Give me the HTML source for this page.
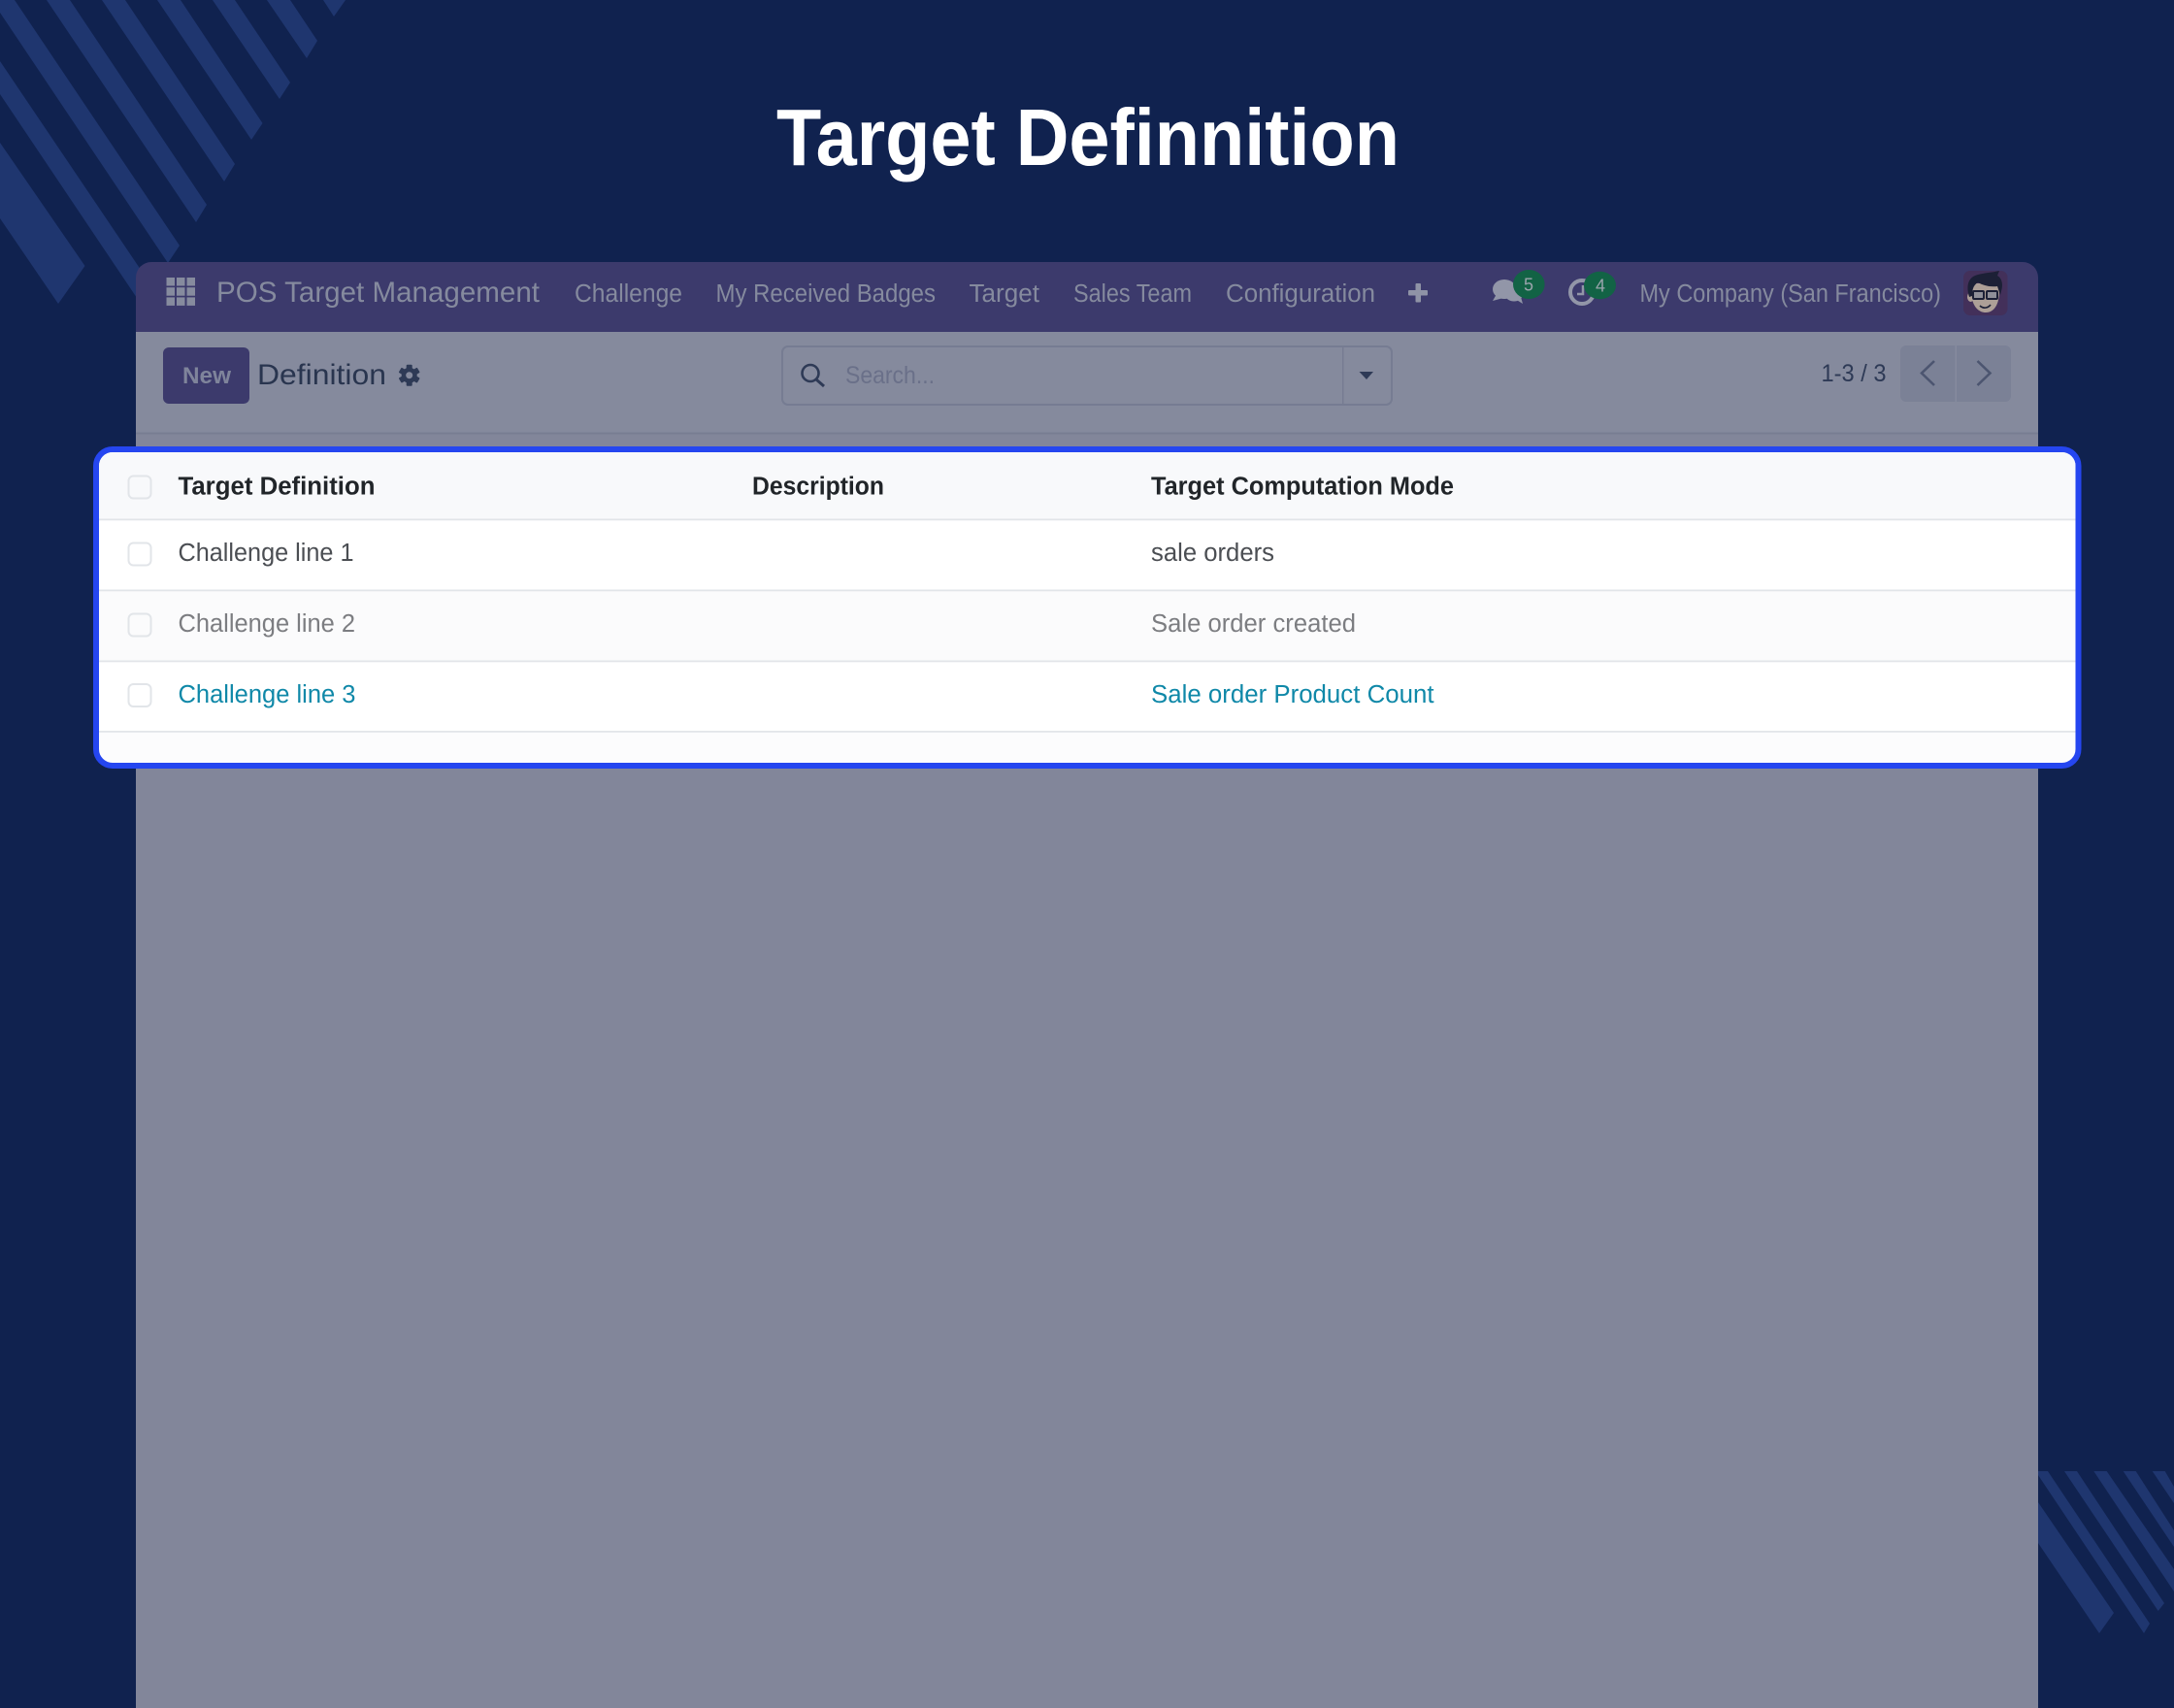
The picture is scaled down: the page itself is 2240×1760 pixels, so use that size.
<!DOCTYPE html>
<html lang="en">
<head>
<meta charset="utf-8">
<title>Target Definnition</title>
<style>
html,body{margin:0;padding:0;background:#10224f;width:2240px;height:1760px;overflow:hidden}
svg{display:block}
text{font-family:"Liberation Sans",sans-serif}
</style>
</head>
<body>
<svg xmlns="http://www.w3.org/2000/svg" width="2240" height="1760" viewBox="0 0 2240 1760">
<rect width="2240" height="1760" fill="#10224f"/>
<!-- top-left stripes -->
<g fill="#1f366f">
<polygon points="333,0 356,0 344,17"/>
<polygon points="275,0 299,0 327,42 316,60"/>
<polygon points="219,0 242,0 299,85 288,102"/>
<polygon points="162,0 186,0 270.5,127 259,144"/>
<polygon points="105,0 129,0 242,169 231,187"/>
<polygon points="48,0 72,0 213,211 202,229"/>
<polygon points="0,0 15,0 185,253 173,271 0,13"/>
<polygon points="0,63 156.5,295 145,313 0,97"/>
<polygon points="0,147 87.5,274 60,313 0,225"/>
</g>
<!-- bottom-right stripes -->
<g fill="#1f366f">
<polygon points="2100,1516 2110,1516 2215,1673 2209,1683 2100,1520"/>
<polygon points="2127,1516 2140,1516 2230,1652 2223.7,1660"/>
<polygon points="2157.3,1516 2170.7,1516 2240,1617 2240,1640"/>
<polygon points="2187.7,1516 2200.7,1516 2240,1577 2240,1594"/>
<polygon points="2217.7,1516 2230.7,1516 2240,1532 2240,1549"/>
<polygon points="2100,1548 2178,1662 2163,1683 2100,1590"/>
</g>

<!-- app window -->
<path d="M140 342V286a16 16 0 0 1 16-16H2084a16 16 0 0 1 16 16V342Z" fill="#3c3a6c"/>
<rect x="140" y="342" width="1960" height="104" fill="#858a9d"/>
<rect x="140" y="446" width="1960" height="1314" fill="#82869a"/>
<rect x="140" y="445.5" width="1960" height="2" fill="#787d92"/>

<!-- nav grid icon -->
<g fill="#868b9e">
<rect x="171.5" y="286" width="8.5" height="8.5"/><rect x="182" y="286" width="8.5" height="8.5"/><rect x="192.5" y="286" width="8.5" height="8.5"/>
<rect x="171.5" y="296.2" width="8.5" height="8.5"/><rect x="182" y="296.2" width="8.5" height="8.5"/><rect x="192.5" y="296.2" width="8.5" height="8.5"/>
<rect x="171.5" y="306.4" width="8.5" height="8.5"/><rect x="182" y="306.4" width="8.5" height="8.5"/><rect x="192.5" y="306.4" width="8.5" height="8.5"/>
</g>
<text x="223" y="311" font-size="29.5" fill="#858a9e" textLength="333" lengthAdjust="spacingAndGlyphs">POS Target Management</text>
<g font-size="25.5" fill="#858a9e">
<text x="592" y="311" textLength="111" lengthAdjust="spacingAndGlyphs">Challenge</text>
<text x="737.5" y="311" textLength="226.500" lengthAdjust="spacingAndGlyphs">My Received Badges</text>
<text x="998.500" y="311" textLength="72.500" lengthAdjust="spacingAndGlyphs">Target</text>
<text x="1106" y="311" textLength="122" lengthAdjust="spacingAndGlyphs">Sales Team</text>
<text x="1263" y="311" textLength="154" lengthAdjust="spacingAndGlyphs">Configuration</text>
<text x="1689.500" y="311" textLength="310.500" lengthAdjust="spacingAndGlyphs">My Company (San Francisco)</text>
</g>
<!-- plus -->
<rect x="1458.500" y="292" width="5.500" height="19.5" rx="1" fill="#8f93a6"/>
<rect x="1451" y="299" width="20" height="5.500" rx="1" fill="#8f93a6"/>

<!-- chat icon -->
<g fill="#9296a8">
<ellipse cx="1550" cy="298" rx="12" ry="10"/>
<path d="M1542 303l-4 7 11-3z"/>
<ellipse cx="1560" cy="305.500" rx="8" ry="5"/>
<path d="M1561 308l8 5-2-7z"/>
</g>
<ellipse cx="1575.3" cy="293" rx="16.3" ry="15" fill="#126345"/>
<text x="1575" y="299.5" font-size="18" text-anchor="middle" fill="#9aa4ac">5</text>
<!-- clock -->
<circle cx="1630" cy="301" r="12" fill="none" stroke="#9296a8" stroke-width="4"/>
<path d="M1631 294v9h-6" fill="none" stroke="#9296a8" stroke-width="2.500"/>
<ellipse cx="1648.5" cy="294" rx="16.5" ry="14.2" fill="#126345"/>
<text x="1649" y="300.5" font-size="18" text-anchor="middle" fill="#9aa4ac">4</text>

<!-- avatar -->
<rect x="2023" y="279" width="45.5" height="46" rx="7" fill="#43305a"/>
<path d="M2031 300c0 13 6 22 15 22s14-9 14-22v-8h-29z" fill="#ad9f97"/>
<ellipse cx="2030.500" cy="306" rx="3.500" ry="5" fill="#ad9f97"/>
<path d="M2029 306c-4-13 0-21 9-23 7-2 14-2 22-4l-2 5c5 3 6 9 4 16l-1 4-3-9c-8 1-15-1-20-4-5 3-6 8-6 14z" fill="#1c2036"/>
<rect x="2033" y="300" width="11" height="8" rx="1" fill="#8f8f98" stroke="#1c2036" stroke-width="2"/>
<rect x="2047" y="300" width="11" height="8" rx="1" fill="#8f8f98" stroke="#1c2036" stroke-width="2"/>
<path d="M2040 315c3 3 8 3 11-1" fill="none" stroke="#1c2036" stroke-width="1.6"/>

<!-- New button -->
<rect x="168" y="358" width="89" height="58" rx="6" fill="#3c3a6c"/>
<text x="188" y="395" font-size="24.5" font-weight="bold" fill="#7f849b" textLength="50" lengthAdjust="spacingAndGlyphs">New</text>
<text x="265" y="396" font-size="30" fill="#29354f" textLength="133" lengthAdjust="spacingAndGlyphs">Definition</text>
<!-- gear -->
<g transform="translate(421.7 386.7)">
<g fill="#2e3a56">
<rect x="-3" y="-11" width="6" height="22" rx="1"/>
<rect x="-3" y="-11" width="6" height="22" rx="1" transform="rotate(60)"/>
<rect x="-3" y="-11" width="6" height="22" rx="1" transform="rotate(120)"/>
<circle r="8"/>
</g>
<circle r="3.5" fill="#858a9d"/>
</g>

<!-- search -->
<rect x="806" y="357" width="628" height="60" rx="6" fill="none" stroke="#767c92" stroke-width="2"/>
<rect x="1383" y="357" width="1.5" height="60" fill="#767c92"/>
<circle cx="835" cy="384.5" r="8.5" fill="none" stroke="#2e3a56" stroke-width="2.6"/>
<path d="M841 391l8 7" stroke="#2e3a56" stroke-width="3" fill="none"/>
<text x="871" y="395" font-size="25" fill="#6a7089" textLength="92" lengthAdjust="spacingAndGlyphs">Search...</text>
<polygon points="1400.5,383 1415,383 1408,391" fill="#2e3a56"/>

<!-- pager -->
<text x="1876.5" y="393" font-size="25" fill="#2e3a56" textLength="67" lengthAdjust="spacingAndGlyphs">1-3 / 3</text>
<rect x="1958" y="356" width="114" height="58" rx="6" fill="#7b8196"/>
<rect x="2014.5" y="356" width="1.5" height="58" fill="#858a9d"/>
<path d="M1993 372l-13 12.5 13 12.5" fill="none" stroke="#4c5570" stroke-width="2.6"/>
<path d="M2037.5 372l13 12.5-13 12.5" fill="none" stroke="#4c5570" stroke-width="2.6"/>

<!-- highlighted table -->
<rect x="99" y="463" width="2042.500" height="326" rx="17" fill="#fcfcfd" stroke="#2546f0" stroke-width="6"/>
<clipPath id="c"><rect x="102" y="466" width="2036.500" height="320" rx="14"/></clipPath>
<g clip-path="url(#c)">
<rect x="102" y="466" width="2037" height="69" fill="#f8f9fb"/>
<rect x="102" y="536" width="2037" height="72" fill="#fff"/>
<rect x="102" y="609" width="2037" height="72" fill="#fbfbfc"/>
<rect x="102" y="682" width="2037" height="71" fill="#fff"/>
<rect x="102" y="534.500" width="2037" height="1.800" fill="#e2e5e9"/>
<rect x="102" y="607.500" width="2037" height="1.800" fill="#e2e5e9"/>
<rect x="102" y="680.500" width="2037" height="1.800" fill="#e2e5e9"/>
<rect x="102" y="753" width="2037" height="1.800" fill="#e2e5e9"/>
</g>
<g fill="none" stroke="#e2e5e9" stroke-width="2">
<rect x="132.500" y="490.500" width="23" height="23" rx="5" fill="#f8f9fb"/>
<rect x="132.500" y="559.500" width="23" height="23" rx="5" fill="#fff"/>
<rect x="132.500" y="632.500" width="23" height="23" rx="5" fill="#fbfbfc"/>
<rect x="132.500" y="705" width="23" height="23" rx="5" fill="#fff"/>
</g>
<g font-size="25.5" font-weight="bold" fill="#212529">
<text x="183.500" y="509.500" textLength="203" lengthAdjust="spacingAndGlyphs">Target Definition</text>
<text x="775" y="509.500" textLength="136" lengthAdjust="spacingAndGlyphs">Description</text>
<text x="1186" y="509.500" textLength="312" lengthAdjust="spacingAndGlyphs">Target Computation Mode</text>
</g>
<g font-size="25.500">
<text x="183.500" y="578" fill="#4b4e53" textLength="181" lengthAdjust="spacingAndGlyphs">Challenge line 1</text>
<text x="1186" y="578" fill="#4b4e53" textLength="127" lengthAdjust="spacingAndGlyphs">sale orders</text>
<text x="183.500" y="651" fill="#7c7d81" textLength="182.500" lengthAdjust="spacingAndGlyphs">Challenge line 2</text>
<text x="1186" y="651" fill="#7c7d81" textLength="211" lengthAdjust="spacingAndGlyphs">Sale order created</text>
<text x="183.500" y="724" fill="#0f88a8" textLength="183" lengthAdjust="spacingAndGlyphs">Challenge line 3</text>
<text x="1186" y="724" fill="#0f88a8" textLength="291.500" lengthAdjust="spacingAndGlyphs">Sale order Product Count</text>
</g>

<!-- title -->
<text x="800" y="170" font-size="83" font-weight="bold" fill="#fff" textLength="642" lengthAdjust="spacingAndGlyphs">Target Definnition</text>
</svg>
</body>
</html>
